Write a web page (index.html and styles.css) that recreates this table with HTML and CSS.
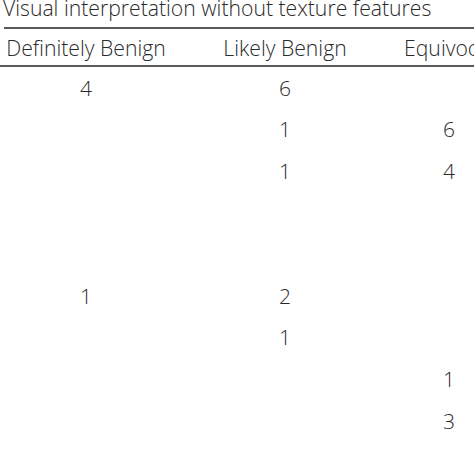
FILE: index.html
```html
<!DOCTYPE html>
<html>
<head>
<meta charset="utf-8">
<link rel="stylesheet" href="styles.css">
</head>
<body>
<div class="page">
  <div class="caption">Visual interpretation without texture features</div>
  <div class="rule top"></div>
  <table class="grid">
    <colgroup>
      <col class="c1"><col class="c2"><col class="c3">
    </colgroup>
    <thead>
      <tr><th>Definitely Benign</th><th>Likely Benign</th><th>Equivocal</th></tr>
    </thead>
    <tbody>
      <tr><td>4</td><td>6</td><td></td></tr>
      <tr><td></td><td>1</td><td>6</td></tr>
      <tr><td></td><td>1</td><td>4</td></tr>
      <tr><td></td><td></td><td></td></tr>
      <tr><td></td><td></td><td></td></tr>
      <tr><td>1</td><td>2</td><td></td></tr>
      <tr><td></td><td>1</td><td></td></tr>
      <tr><td></td><td></td><td>1</td></tr>
      <tr><td></td><td></td><td>3</td></tr>
    </tbody>
  </table>
</div>
</body>
</html>
```
FILE: styles.css
```css
html, body {
  margin: 0;
  padding: 0;
  background: #ffffff;
  overflow: hidden;
}
.page {
  width: 474px;
  height: 474px;
  overflow: hidden;
  font-family: "Open Sans", "DejaVu Sans", sans-serif;
  font-weight: 300;
  color: #2a2a2a;
}
.caption {
  font-size: 21.2px;
  line-height: 26px;
  height: 32px;
  margin-top: -5px;
  padding-left: 3px;
  white-space: nowrap;
}
.rule {
  height: 2px;
  background: #5a5a5a;
}
.rule.top {
  margin-left: 4px;
}
.grid {
  border-collapse: collapse;
  table-layout: fixed;
  width: 500px;
}
.c1 { width: 172px; }
.c2 { width: 226px; }
.c3 { width: 102px; }
.grid th {
  font-weight: 300;
  font-size: 21.2px;
  height: 36px;
  padding: 0;
  text-align: center;
  white-space: nowrap;
  border-bottom: 2px solid #5a5a5a;
  vertical-align: middle;
}
.grid td {
  font-size: 21px;
  height: 41.6px;
  padding: 0;
  text-align: center;
  vertical-align: middle;
}
```
